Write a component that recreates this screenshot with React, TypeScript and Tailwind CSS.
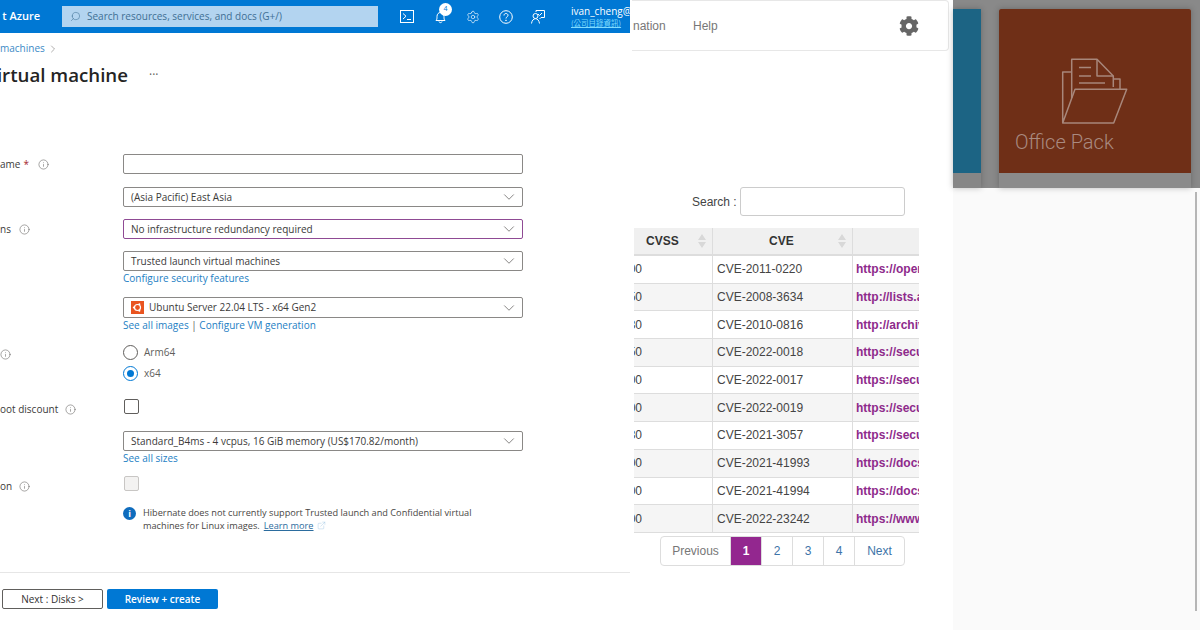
import { ChevronDown, ChevronRight, ExternalLink, Info, Search, Settings } from "lucide-react";
import type { ReactNode } from "react";
import { FaCog } from "react-icons/fa";

const rows = [
  ["00", "CVE-2011-0220", "https://open"],
  ["50", "CVE-2008-3634", "http://lists.apple"],
  ["30", "CVE-2010-0816", "http://archive"],
  ["50", "CVE-2022-0018", "https://security"],
  ["00", "CVE-2022-0017", "https://security"],
  ["00", "CVE-2022-0019", "https://security"],
  ["30", "CVE-2021-3057", "https://security"],
  ["00", "CVE-2021-41993", "https://docs"],
  ["00", "CVE-2021-41994", "https://docs"],
  ["00", "CVE-2022-23242", "https://www"],
];

function InfoDot({ className = "" }: { className?: string }) {
  return <Info className={`h-[11px] w-[11px] shrink-0 text-[#605e5c] ${className}`} strokeWidth={1.2} />;
}

function Select({ children, border = "border-[#8a8886]", height = "h-5" }: { children?: ReactNode; border?: string; height?: string }) {
  return (
    <div className={`flex w-[400px] items-center justify-between rounded-[2px] border pl-[7px] pr-[4px] text-[10px] text-[#3b3a39] ${height} ${border}`}>
      <div className="flex items-center whitespace-nowrap">{children}</div>
      <ChevronDown className="h-[18px] w-[18px] text-[#605e5c]" strokeWidth={1} />
    </div>
  );
}

function FormRow({ label, children, className = "" }: { label?: ReactNode; children: ReactNode; className?: string }) {
  return (
    <div className={`flex ${className}`}>
      <div className="flex w-[123px] shrink-0 items-center whitespace-nowrap text-[10px] text-[#3b3a39]">{label}</div>
      <div>{children}</div>
    </div>
  );
}

function FormLink({ children }: { children: ReactNode }) {
  return <div className="h-[14px] text-[10px] leading-[14px] text-[#2480c4]">{children}</div>;
}

function Radio({ checked }: { checked?: boolean }) {
  return (
    <div className={`flex h-[15px] w-[15px] items-center justify-center rounded-full border ${checked ? "border-[#0078d4]" : "border-[#605e5c]"}`}>
      {checked && <div className="h-[7px] w-[7px] rounded-full bg-[#0078d4]" />}
    </div>
  );
}

function TerminalIcon() {
  return (
    <svg width="14" height="13" viewBox="0 0 14 13" fill="none" stroke="white" strokeWidth="1">
      <rect x="0.5" y="0.5" width="13" height="12" />
      <path d="M3 3.5 6 6.2 3 9M7 9.5h4" />
    </svg>
  );
}

function BellIcon() {
  return (
    <svg width="11" height="13" viewBox="0 0 11 13" fill="none" stroke="white" strokeWidth="1">
      <path d="M1 9.5c1-1 1-2 1-4C2 3 3.5 1.5 5.5 1.5S9 3 9 5.5c0 2 0 3 1 4zM4 10.5c.3 1.5 2.7 1.5 3 0" />
    </svg>
  );
}

function FeedbackIcon() {
  return (
    <svg width="14" height="14" viewBox="0 0 14 14" fill="none" stroke="white" strokeWidth="1" className="shrink-0">
      <path d="M5 2V.5h8.5v7H10L8.500 9" />
      <path d="M7 4 8.500 5.500 11 3" />
      <circle cx="4.500" cy="6" r="2.500" />
      <path d="M.5 13.500c.4-3 2-4.800 4-4.800s3.600 1.800 4 4.800" />
    </svg>
  );
}

function UbuntuIcon() {
  return (
    <svg width="13" height="13" viewBox="0 0 13 13" className="mr-[5px]">
      <rect width="13" height="13" fill="#e95420" />
      <circle cx="6.500" cy="6.500" r="3" fill="none" stroke="white" strokeWidth="1.2" />
      <circle cx="2.800" cy="6.500" r="1" fill="white" />
      <circle cx="8.400" cy="3.300" r="1" fill="white" />
      <circle cx="8.400" cy="9.700" r="1" fill="white" />
    </svg>
  );
}

function FolderIcon() {
  return (
    <svg width="70" height="70" viewBox="0 0 70 70" fill="none" stroke="#a8877b" strokeWidth="1.500" strokeLinejoin="round">
      <path d="M11.700 41V2.300H37L53.300 19v11" />
      <path d="M37 2.300V19h16.300" />
      <path d="M11.700 15H2.700v51h51L66.700 32.300H15L2.700 66" />
      <path d="M53.300 22H60v10" />
      <path d="M19 10.500h12M19 19h12M19 26h26" />
    </svg>
  );
}

function SortArrows() {
  return (
    <svg width="8" height="14" viewBox="0 0 8 14" fill="#d8d8d8">
      <path d="M4 0 8 6H0zM0 8h8l-4 6z" />
    </svg>
  );
}

function AzurePane() {
  return (
    <div className="h-[630px] w-[630px] shrink-0 overflow-hidden bg-white" style={{ fontFamily: '"Open Sans", "Noto Sans", sans-serif' }}>
      <div className="flex h-[33px] items-center bg-[#0078d4] text-white">
        <div className="flex w-[62px] shrink-0 justify-end whitespace-nowrap pr-[22px] text-[11px] font-semibold">t Azure</div>
        <div className="flex h-[21px] w-[316px] shrink-0 items-center bg-[#b3d4f0] pl-[8px] text-[10px] text-[#3f6f94]">
          <Search className="mr-[6px] h-[11px] w-[11px] -scale-x-100" strokeWidth={1.2} />
          Search resources, services, and docs (G+/)
        </div>
        <div className="ml-[22px] flex shrink-0">
          <TerminalIcon />
        </div>
        <div className="relative ml-[21px] mt-[2px] flex shrink-0">
          <BellIcon />
          <span className="absolute -right-[6px] -top-[8px] flex h-[13px] w-[13px] items-center justify-center rounded-full bg-white text-[7px] text-[#0078d4]">4</span>
        </div>
        <Settings className="ml-[20px] h-[14px] w-[14px] shrink-0" strokeWidth={1.1} />
        <svg width="14" height="14" viewBox="0 0 14 14" fill="none" stroke="white" strokeWidth="1" className="ml-[19px] shrink-0">
          <circle cx="7" cy="7" r="6.300" />
          <path d="M5 5.500C5 4 6 3.500 7 3.500s2 .7 2 1.800C9 6.800 7 6.800 7 8.500" />
          <circle cx="7" cy="10.300" r=".4" />
        </svg>
        <div className="ml-[18px] flex shrink-0">
          <FeedbackIcon />
        </div>
        <div className="ml-[26px] flex w-[59px] shrink-0 flex-col overflow-hidden whitespace-nowrap text-[10px] leading-[13px]">
          <span>ivan_cheng@</span>
          <span className="text-[7.5px] leading-[10px] text-[#7fdcff] underline" style={{ fontFamily: '"Noto Sans CJK TC", sans-serif' }}>(公司目錄資訊)</span>
        </div>
      </div>

      <div className="mt-[8px] flex items-center text-[10px] text-[#3c8ac6]">
        <span>machines</span>
        <ChevronRight className="ml-[2px] h-3 w-3 text-[#605e5c]" strokeWidth={1} />
      </div>

      <div className="mt-[6px] flex items-center">
        <div className="flex w-[128px] justify-end whitespace-nowrap text-[18.7px] font-semibold leading-[26px] text-[#242424]">irtual machine</div>
        <span className="ml-[21px] text-[12px] leading-none text-[#605e5c]">···</span>
      </div>

      <FormRow className="mt-[66px]" label={<><span>ame</span><span className="ml-[3px] text-[#a4262c]">*</span><InfoDot className="ml-[9px]" /></>}>
        <div className="h-5 w-[400px] rounded-[2px] border border-[#8a8886]" />
      </FormRow>
      <FormRow className="mt-[13px]">
        <Select>(Asia Pacific) East Asia</Select>
      </FormRow>
      <FormRow className="mt-[12px]" label={<><span>ns</span><InfoDot className="ml-[8px]" /></>}>
        <Select border="border-[#8f4a94]">No infrastructure redundancy required</Select>
      </FormRow>
      <FormRow className="mt-[12px]">
        <Select>Trusted launch virtual machines</Select>
        <FormLink>Configure security features</FormLink>
      </FormRow>
      <FormRow className="mt-[12px]">
        <Select height="h-[21px]">
          <UbuntuIcon />
          Ubuntu Server 22.04 LTS - x64 Gen2
        </Select>
        <FormLink>
          See all images <span className="text-[#605e5c]">|</span> Configure VM generation
        </FormLink>
      </FormRow>

      <FormRow className="mt-[13px]" label={<InfoDot className="mt-[4px] self-start" />}>
        <div className="flex items-center gap-[6px] text-[10px] text-[#605e5c]">
          <Radio />
          <span>Arm64</span>
        </div>
        <div className="mt-[6px] flex items-center gap-[6px] text-[10px] text-[#605e5c]">
          <Radio checked />
          <span>x64</span>
        </div>
      </FormRow>

      <FormRow className="mt-[18px] h-[15px]" label={<><span className="mt-[6px]">oot discount</span><InfoDot className="ml-[7px] mt-[6px]" /></>}>
        <div className="ml-px h-[15px] w-[15px] rounded-[2px] border border-[#605e5c]" />
      </FormRow>

      <FormRow className="mt-[17px]">
        <Select>Standard_B4ms - 4 vcpus, 16 GiB memory (US$170.82/month)</Select>
        <FormLink>See all sizes</FormLink>
      </FormRow>

      <FormRow className="mt-[11px] h-[15px]" label={<><span className="mt-[6px]">on</span><InfoDot className="ml-[7px] mt-[6px]" /></>}>
        <div className="ml-px h-[15px] w-[15px] rounded-[2px] border border-[#c8c6c4] bg-[#f3f2f1]" />
      </FormRow>

      <FormRow className="mt-[15px]">
        <div className="flex">
          <div className="mt-[1px] flex h-[13px] w-[13px] shrink-0 items-center justify-center rounded-full bg-[#0f6cbd] text-[9px] font-bold text-white">i</div>
          <div className="ml-[7px] text-[9.2px] leading-[13px] text-[#484644]">
            <div className="whitespace-nowrap">Hibernate does not currently support Trusted launch and Confidential virtual</div>
            <div className="flex items-center whitespace-nowrap">
              machines for Linux images.
              <span className="ml-[4px] text-[#2b6c9e] underline">Learn more</span>
              <ExternalLink className="ml-[3px] h-[9px] w-[9px] text-[#8dbbe0]" strokeWidth={1} />
            </div>
          </div>
        </div>
      </FormRow>

      <div className="mt-[40px] h-[1px] bg-[#e6e6e6]" />

      <div className="mt-[16px] flex pl-[2px] text-[10px]">
        <div className="flex h-5 w-[101px] items-center justify-center rounded-[2px] border border-[#605e5c] text-[#323130]">Next : Disks &gt;</div>
        <div className="ml-[4px] flex h-5 w-[111px] items-center justify-center rounded-[2px] bg-[#0078d4] font-semibold text-white">Review + create</div>
      </div>
    </div>
  );
}

function PageItem({ children, className }: { children: ReactNode; className: string }) {
  return <div className={`flex h-full items-center justify-center border-r border-[#ddd] last:border-r-0 ${className}`}>{children}</div>;
}

function TablePane() {
  return (
    <div className="h-[630px] w-[323px] shrink-0 bg-white pl-[2px]" style={{ fontFamily: '"Liberation Sans", sans-serif' }}>
      <div className="flex h-[51px] w-[317px] items-center rounded-r-[4px] border border-l-0 border-[#e7e7e7] text-[12px] text-[#777]">
        <span className="w-[61px] pl-px">nation</span>
        <span>Help</span>
        <FaCog className="ml-[181px] h-5 w-5 text-[#666]" />
      </div>

      <div className="mt-[136px] flex items-center pl-[60px] text-[12px] text-[#444]">
        <span>Search :</span>
        <div className="ml-[3px] h-[29px] w-[165px] rounded-[3px] border border-[#ccc]" />
      </div>

      <div className="ml-[2px] mt-[12px] w-[285px] text-[12px]">
        <div className="grid h-[28px] grid-cols-[79px_140px_66px] border-b-2 border-[#ddd] bg-[#f0f0f0] font-bold text-[#333]">
          <div className="flex items-center justify-between border-r border-[#ddd] pl-[12px] pr-[6px]">
            CVSS
            <SortArrows />
          </div>
          <div className="flex items-center justify-between border-r border-[#ddd] pl-[56px] pr-[6px]">
            CVE
            <SortArrows />
          </div>
          <div />
        </div>
        {rows.map((row, i) => (
          <div key={row[1]} className={`grid h-[27.7px] grid-cols-[79px_140px_66px] border-b border-[#ddd] text-[#444] ${i % 2 === 1 ? "bg-[#f5f5f5]" : "bg-white"}`}>
            <div className="flex items-center border-r border-[#ddd]">
              <div className="flex w-[8px] justify-end overflow-hidden">{row[0]}</div>
            </div>
            <div className="flex items-center border-r border-[#ddd] pl-[4px]">{row[1]}</div>
            <div className="flex items-center overflow-hidden whitespace-nowrap pl-[3px] font-bold text-[#8e2a8b]">{row[2]}</div>
          </div>
        ))}
      </div>

      <div className="ml-[28px] mt-[3px] flex h-[30px] w-[245px] overflow-hidden rounded-[4px] border border-[#ddd] text-[12px] text-[#3d74a8]">
        <PageItem className="w-[70px] text-[#777]">Previous</PageItem>
        <PageItem className="w-[31px] bg-[#93278f] font-bold text-white">1</PageItem>
        <PageItem className="w-[31px]">2</PageItem>
        <PageItem className="w-[31px]">3</PageItem>
        <PageItem className="w-[31px]">4</PageItem>
        <PageItem className="flex-1">Next</PageItem>
      </div>
    </div>
  );
}

function TilesPane() {
  return (
    <div className="flex h-[630px] flex-1 flex-col bg-[#fafafa]">
      <div className="flex h-[188px] gap-[18px] bg-[#898989] pt-[9px]">
        <div className="h-[179px] w-[28px] bg-[#868686] shadow-[0_0_6px_rgba(0,0,0,0.25)]">
          <div className="h-[164px] bg-[#1c6484]" />
        </div>
        <div className="h-[179px] w-[192px] bg-[#8b8b8b] shadow-[0_0_6px_rgba(0,0,0,0.25)]">
          <div className="h-[164px] rounded-t-[2px] bg-[#6f2f17] pl-[16px] pt-[48px]">
            <div className="ml-[45px]">
              <FolderIcon />
            </div>
            <div className="mt-[2px] text-[20px] font-light leading-[26px] text-[#a98a80]" style={{ fontFamily: "Roboto, sans-serif" }}>
              Office Pack
            </div>
          </div>
        </div>
      </div>
      <div className="flex justify-end pr-[3px] pt-[4px]">
        <div className="h-[419px] w-[2px] bg-[#b5b5b5]" />
      </div>
    </div>
  );
}

export default function App() {
  return (
    <div className="flex h-[630px] w-[1200px] overflow-hidden bg-white">
      <AzurePane />
      <TablePane />
      <TilesPane />
    </div>
  );
}
